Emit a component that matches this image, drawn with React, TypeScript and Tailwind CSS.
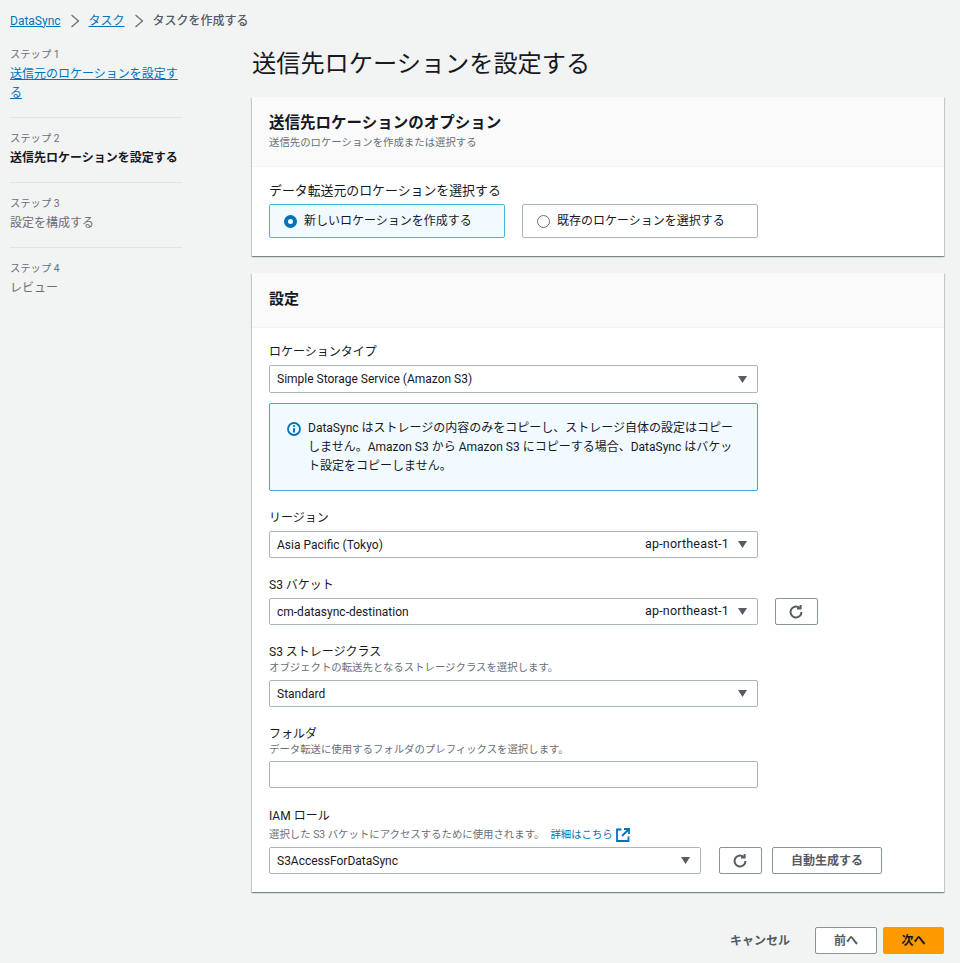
import type { ReactNode } from "react"

const font = "font-['Roboto','Noto_Sans_CJK_JP',sans-serif]"
const cardShadow = "shadow-[0_1px_1px_0_rgba(0,28,36,0.3),1px_1px_1px_0_rgba(0,28,36,0.15),-1px_1px_1px_0_rgba(0,28,36,0.15)]"

function Caret() {
  return (
    <svg width="9" height="7" viewBox="0 0 9 7" className="shrink-0">
      <path d="M0 0h9L4.5 7z" fill="#545b64" />
    </svg>
  )
}

function Chevron() {
  return (
    <svg width="10" height="14" viewBox="0 0 10 14" className="mx-[9px]" fill="none" stroke="#687078" strokeWidth="1.3">
      <path d="M1.5 1l7 6-7 6" />
    </svg>
  )
}

function Select({ value, tag, width = "w-[489px]", height = "h-7" }: { value: string; tag?: string; width?: string; height?: string }) {
  return (
    <div className={`${width} ${height} flex items-center justify-between rounded-[2px] border border-[#aab7b8] bg-white pl-[7px] pr-[10px] text-[12px] text-[#16191f]`}>
      <span>{value}</span>
      <div className="flex items-center gap-[9px]">
        {tag && <span className="text-[12.5px] tracking-[0.2px]">{tag}</span>}
        <Caret />
      </div>
    </div>
  )
}

function Refresh() {
  return (
    <button className="flex h-[27px] w-[43px] items-center justify-center rounded-[2px] border border-[#879596] bg-white">
      <svg width="16" height="16" viewBox="0 0 16 16" fill="none" stroke="#545b64" strokeWidth="2" className="-ml-[2px]">
        <path d="M13.5 8a5.5 5.5 0 1 1-2-4.2" />
        <path d="M12.6 1v3.6H9" />
      </svg>
    </button>
  )
}

function Field({ label, desc, className, children }: { label: string; desc?: ReactNode; className?: string; children: ReactNode }) {
  return (
    <div className={className}>
      <div className="text-[12px] leading-[16px] text-[#16191f]">{label}</div>
      {desc && <div className="mt-[1px] text-[10.4px] leading-[14px] text-[#687078]">{desc}</div>}
      {children}
    </div>
  )
}

function Step({ n, children, border = true }: { n: number; children: ReactNode; border?: boolean }) {
  return (
    <div className={border ? "mb-[13px] border-b border-[#e1e4e5] pb-[14px]" : ""}>
      <div className="text-[10.3px] leading-[16px] text-[#687078]">ステップ {n}</div>
      <div className="mt-[2px] text-[12px] leading-[19px]">{children}</div>
    </div>
  )
}

function Radio({ label, checked }: { label: string; checked?: boolean }) {
  return (
    <div className={`flex h-[34px] w-[236px] items-center gap-[7px] rounded-[2px] border pl-[14px] text-[12px] text-[#16191f] ${checked ? "border-[#44b9d6] bg-[#f1faff]" : "border-[#aab7b8] bg-white"}`}>
      {checked ? (
        <span className="size-[13px] rounded-full border-[4px] border-[#0073bb] bg-white" />
      ) : (
        <span className="size-[13px] rounded-full border border-[#687078] bg-white" />
      )}
      <span>{label}</span>
    </div>
  )
}

export default function App() {
  return (
    <div className={`${font} h-[963px] overflow-hidden bg-[#f2f3f3] antialiased`}>
      <nav className="flex h-[40px] items-center pl-[10px] pt-[1px] text-[12px] text-[#545b64]">
        <a className="text-[#0073bb] underline">DataSync</a>
        <Chevron />
        <a className="text-[#0073bb] underline">タスク</a>
        <Chevron />
        <span className="font-medium">タスクを作成する</span>
      </nav>

      <div className="flex">
        <aside className="ml-[10px] w-[172px] shrink-0 pt-[7px]">
          <Step n={1}><a className="text-[#0073bb] underline">送信元のロケーションを設定する</a></Step>
          <Step n={2}><span className="font-bold text-[#16191f]">送信先ロケーションを設定する</span></Step>
          <Step n={3}><span className="text-[#687078]">設定を構成する</span></Step>
          <Step n={4} border={false}><span className="text-[#687078]">レビュー</span></Step>
        </aside>

        <main className="ml-[70px] w-[692px]">
          <h1 className="pt-[2px] text-[24.2px] leading-[44px] text-[#16191f]">送信先ロケーションを設定する</h1>

          <section className={`mt-[11px] bg-white ${cardShadow}`}>
            <header className="h-[70px] border-b border-[#f2f3f3] bg-[#fafafa] px-[17px] pt-[16px]">
              <h2 className="text-[15.5px] font-bold leading-[20px] text-[#16191f]">送信先ロケーションのオプション</h2>
              <p className="mt-[3px] text-[10.4px] leading-[14px] text-[#687078]">送信先のロケーションを作成または選択する</p>
            </header>
            <div className="h-[89px] px-[17px] pt-[16px]">
              <div className="text-[12.9px] leading-[16px] text-[#16191f]">データ転送元のロケーションを選択する</div>
              <div className="mt-[5px] flex gap-[17px]">
                <Radio label="新しいロケーションを作成する" checked />
                <Radio label="既存のロケーションを選択する" />
              </div>
            </div>
          </section>

          <section className={`mt-[17px] h-[619px] bg-white ${cardShadow}`}>
            <header className="flex h-[55px] items-center border-b border-[#f2f3f3] bg-[#fafafa] px-[17px] pb-[2px]">
              <h2 className="text-[15px] font-bold text-[#16191f]">設定</h2>
            </header>
            <div className="px-[17px] pt-[16px]">
              <Field label="ロケーションタイプ">
                <div className="mt-[5px]"><Select value="Simple Storage Service (Amazon S3)" /></div>
              </Field>
              <div className="mt-[10px] flex h-[88px] w-[489px] gap-[7px] rounded-[2px] border border-[#44a5dc] bg-[#f1faff] pl-[17px] pr-[13px] pt-[15px] text-[12px] leading-[19px] text-[#16191f]">
                <svg width="14" height="14" viewBox="0 0 14 14" className="mt-[3px] shrink-0" fill="none">
                  <circle cx="7" cy="7" r="6" stroke="#0073bb" strokeWidth="1.8" />
                  <path d="M7 6.2v4.3" stroke="#0073bb" strokeWidth="2" />
                  <circle cx="7" cy="4" r="1.1" fill="#0073bb" />
                </svg>
                <p>DataSync はストレージの内容のみをコピーし、ストレージ自体の設定はコピーしません。Amazon S3 から Amazon S3 にコピーする場合、DataSync はバケット設定をコピーしません。</p>
              </div>
              <Field label="リージョン" className="mt-[19px]">
                <div className="mt-[5px]"><Select value="Asia Pacific (Tokyo)" tag="ap-northeast-1" height="h-[27px]" /></div>
              </Field>
              <Field label="S3 バケット" className="mt-[19px]">
                <div className="mt-[5px] flex gap-[17px]">
                  <Select value="cm-datasync-destination" tag="ap-northeast-1" height="h-[27px]" />
                  <Refresh />
                </div>
              </Field>
              <Field label="S3 ストレージクラス" desc="オブジェクトの転送先となるストレージクラスを選択します。" className="mt-[19px]">
                <div className="mt-[5px]"><Select value="Standard" height="h-[27px]" /></div>
              </Field>
              <Field label="フォルダ" desc="データ転送に使用するフォルダのプレフィックスを選択します。" className="mt-[19px]">
                <div className="mt-[4px] h-[27px] w-[489px] rounded-[2px] border border-[#aab7b8] bg-white" />
              </Field>
              <Field
                label="IAM ロール"
                desc={
                  <span className="flex items-center pt-[3px]">
                    選択した S3 バケットにアクセスするために使用されます。
                    <a className="ml-[6px] flex items-center gap-[3px] text-[#0073bb]">
                      詳細はこちら
                      <svg width="14" height="14" viewBox="0 0 14 14" fill="none" stroke="#0073bb" strokeWidth="1.8">
                        <path d="M5.5 1.5H1v11.5h11.5V8.5" />
                        <path d="M8 1h5v5" />
                        <path d="M13 1L6 8" />
                      </svg>
                    </a>
                  </span>
                }
                className="mt-[20px]"
              >
                <div className="mt-[5px] flex">
                  <Select value="S3AccessForDataSync" width="w-[432px]" height="h-[27px]" />
                  <div className="ml-[18px]"><Refresh /></div>
                  <button className="ml-[10px] h-[27px] w-[110px] rounded-[2px] border border-[#879596] bg-white text-[12px] font-bold text-[#545b64]">自動生成する</button>
                </div>
              </Field>
            </div>
          </section>

          <div className="mt-[35px] flex items-center justify-end text-[12px] font-bold">
            <button className="mr-[25px] text-[#545b64]">キャンセル</button>
            <button className="h-[27px] w-[62px] rounded-[2px] border border-[#879596] bg-white text-[#545b64]">前へ</button>
            <button className="ml-[6px] h-[27px] w-[61px] rounded-[2px] bg-[#ff9900] text-[#16191f]">次へ</button>
          </div>
        </main>
      </div>
    </div>
  )
}
